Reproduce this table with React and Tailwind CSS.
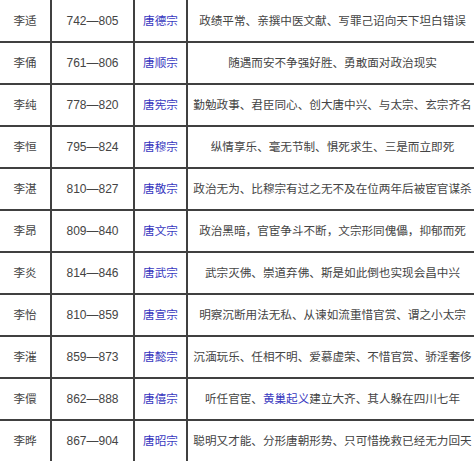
import React from 'react';

const rows = [
  { name: '李适', years: '742—805', title: '唐德宗', note: '政绩平常、亲撰中医文献、写罪己诏向天下坦白错误' },
  { name: '李俑', years: '761—806', title: '唐顺宗', note: '随遇而安不争强好胜、勇敢面对政治现实' },
  { name: '李纯', years: '778—820', title: '唐宪宗', note: '勤勉政事、君臣同心、创大唐中兴、与太宗、玄宗齐名' },
  { name: '李恒', years: '795—824', title: '唐穆宗', note: '纵情享乐、毫无节制、惧死求生、三是而立即死' },
  { name: '李湛', years: '810—827', title: '唐敬宗', note: '政治无为、比穆宗有过之无不及在位两年后被宦官谋杀' },
  { name: '李昂', years: '809—840', title: '唐文宗', note: '政治黑暗，官宦争斗不断，文宗形同傀儡，抑郁而死' },
  { name: '李炎', years: '814—846', title: '唐武宗', note: '武宗灭佛、崇道弃佛、斯是如此倒也实现会昌中兴' },
  { name: '李怡', years: '810—859', title: '唐宣宗', note: '明察沉断用法无私、从谏如流重惜官赏、谓之小太宗' },
  { name: '李漼', years: '859—873', title: '唐懿宗', note: '沉湎玩乐、任相不明、爱慕虚荣、不惜官赏、骄淫奢侈' },
  { name: '李儇', years: '862—888', title: '唐僖宗', note: null },
  { name: '李晔', years: '867—904', title: '唐昭宗', note: '聪明又才能、分形唐朝形势、只可惜挽救已经无力回天' },
];

const font = { fontFamily: '"Liberation Sans", "Noto Sans CJK SC", sans-serif' };

export default function App() {
  return (
    <div className="w-[474px] h-[462px] overflow-hidden bg-white" style={font}>
      <div className="w-[477px] text-[#444]">
        {rows.map((r, i) => (
          <div
            key={r.name}
            className={`flex ${i > 0 ? 'h-[42px] border-t-2 border-[#404040]' : 'h-[41px]'}`}
          >
            <div className="w-[50px] flex items-center justify-center text-[11.6px]">{r.name}</div>
            <div className="w-[83px] border-l-2 border-[#404040] flex items-center justify-center text-[12px]">
              {r.years}
            </div>
            <div className="w-[53px] border-l-2 border-[#404040] flex items-center justify-center text-[11.6px] text-[#3838c0]">
              {r.title}
            </div>
            <div className="flex-1 border-l-2 border-[#404040] flex items-center justify-center text-[11.6px] whitespace-nowrap">
              {r.note ?? (
                <span>
                  听任官宦、<span className="text-[#3838c0]">黄巢起义</span>建立大齐、其人躲在四川七年
                </span>
              )}
            </div>
          </div>
        ))}
      </div>
    </div>
  );
}
